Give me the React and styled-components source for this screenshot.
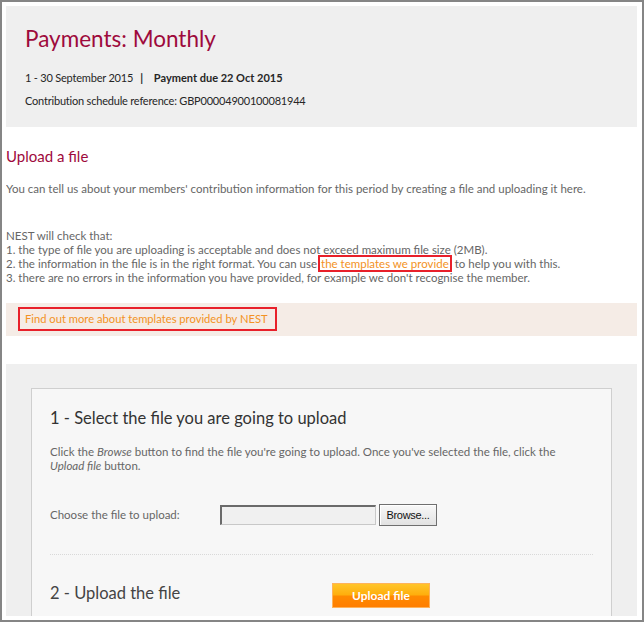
import React from 'react';
import styled, { createGlobalStyle } from 'styled-components';

const FONT = `"Lato", "Liberation Sans", Arial, sans-serif`;

const Global = createGlobalStyle`
  html, body { margin: 0; padding: 0; background: #fff; }
  body { font-family: ${FONT}; }
  * { box-sizing: border-box; }
`;

const Frame = styled.div`
  width: 644px;
  height: 622px;
  border: 2px solid #858585;
  padding: 4px;
  background: #fff;
`;

const Inner = styled.div`
  height: 100%;
  overflow: hidden;
  display: flex;
  flex-direction: column;
`;

const Header = styled.header`
  flex: none;
  background: #efefef;
  margin-right: 1px;
  height: 121px;
  padding: 20px 19px 0;
`;

const Title = styled.h1`
  margin: 0;
  font-size: 22.5px;
  line-height: 26px;
  font-weight: normal;
  color: #9e0a3c;
`;

const Meta = styled.p`
  margin: ${(p) => p.$mt}px 0 0;
  font-size: 11px;
  line-height: 14px;
  color: #262626;
  letter-spacing: -0.2px;
`;

const Strong = styled.strong`
  font-weight: bold;
  letter-spacing: 0;
`;

const Sep = styled.span`
  font-weight: bold;
  margin: 0 11px 0 7px;
`;

const SectionTitle = styled.h2`
  margin: 20px 0 0;
  font-size: 15px;
  line-height: 18px;
  font-weight: normal;
  color: #9e0a3c;
`;

const Text = styled.p`
  margin: ${(p) => p.$mt}px 0 0;
  max-width: ${(p) => p.$max || 'none'};
  font-size: 11.5px;
  line-height: 14px;
  color: #666;
`;

const Boxed = styled.span`
  border: 2px solid #e8202a;
  padding: 0 1px;
  margin-left: -2px;
`;

const Link = styled.a`
  color: #f39224;
  text-decoration: none;
`;

const Banner = styled.div`
  flex: none;
  margin: 18px 1px 0 0;
  background: #f5ece6;
  padding: 4px 12px 5px;
`;

const BannerBox = styled.span`
  display: inline-block;
  border: 2px solid #e8202a;
  padding: 3px 7px 3px 5px;
  font-size: 11.2px;
  line-height: 14px;
`;

const GraySection = styled.section`
  flex: 1;
  min-height: 0;
  margin: 28px 1px 0 0;
  background: #efefef;
  padding: 24px 25px 0;
  display: flex;
  flex-direction: column;
`;

const Card = styled.div`
  flex: 1;
  background: #f7f7f7;
  border: 1px solid #cfcfcf;
  border-bottom: none;
  padding: 19px 18px 0;
`;

const StepTitle = styled.h3`
  margin: 0;
  font-size: 16.5px;
  line-height: 20px;
  font-weight: normal;
  color: #333;
`;

const FileRow = styled.div`
  display: flex;
  align-items: center;
  height: 22px;
  margin-top: 31px;
`;

const Label = styled.span`
  width: 170px;
  font-size: 11.5px;
  line-height: 14px;
  color: #666;
`;

const FileInput = styled.div`
  width: 156px;
  height: 20px;
  background: #f0f0f0;
  border-style: solid;
  border-width: 2px 1px 1px 2px;
  border-color: #6a6a6a #c8c8c8 #c8c8c8 #6a6a6a;
`;

const BrowseButton = styled.button`
  margin-left: 3px;
  width: 58px;
  height: 22px;
  padding: 0;
  border: 1px solid #6f6f6f;
  box-shadow: inset 1px 1px 0 #fff;
  background: linear-gradient(#f8f8f8, #e2e2e2);
  font-family: "Liberation Sans", Arial, sans-serif;
  font-size: 11px;
  color: #111;
  letter-spacing: -0.3px;
`;

const Divider = styled.hr`
  margin: 28px 0 0;
  border: none;
  border-top: 1px dotted #d9d9d9;
  height: 0;
`;

const UploadRow = styled.div`
  display: flex;
  align-items: flex-start;
  margin-top: 28px;
`;

const UploadTitle = styled(StepTitle)`
  width: 282px;
  color: #444;
`;

const UploadButton = styled.button`
  width: 98px;
  height: 25px;
  padding: 0;
  border: 1px solid #ffb35a;
  background: linear-gradient(#ffc52a 0%, #ffae0c 48%, #ff8a00 52%, #ff7e00 100%);
  color: #fff;
  font-family: ${FONT};
  font-weight: bold;
  font-size: 12px;
`;

export default function App() {
  return (
    <>
      <Global />
      <Frame>
        <Inner>
          <Header>
            <Title>Payments: Monthly</Title>
            <Meta $mt={19}>
              1 - 30 September 2015<Sep>|</Sep>
              <Strong>Payment due 22 Oct 2015</Strong>
            </Meta>
            <Meta $mt={9}>Contribution schedule reference: GBP00004900100081944</Meta>
          </Header>

          <SectionTitle>Upload a file</SectionTitle>
          <Text $mt={17}>
            You can tell us about your members' contribution information for this period by creating a file and uploading it here.
          </Text>
          <Text $mt={33}>
            NEST will check that:
            <br />
            1. the type of file you are uploading is acceptable and does not exceed maximum file size (2MB).
            <br />
            2. the information in the file is in the right format. You can use{' '}
            <Boxed>
              <Link href="#">the templates we provide</Link>
            </Boxed>{' '}
            to help you with this.
            <br />
            3. there are no errors in the information you have provided, for example we don't recognise the member.
          </Text>

          <Banner>
            <BannerBox>
              <Link href="#">Find out more about templates provided by NEST</Link>
            </BannerBox>
          </Banner>

          <GraySection>
            <Card>
              <StepTitle>1 - Select the file you are going to upload</StepTitle>
              <Text $mt={17} $max="520px">
                Click the <em>Browse</em> button to find the file you're going to upload. Once you've selected the file, click the{' '}
                <em>Upload file</em> button.
              </Text>
              <FileRow>
                <Label>Choose the file to upload:</Label>
                <FileInput />
                <BrowseButton type="button">Browse...</BrowseButton>
              </FileRow>
              <Divider />
              <UploadRow>
                <UploadTitle>2 - Upload the file</UploadTitle>
                <UploadButton type="button">Upload file</UploadButton>
              </UploadRow>
            </Card>
          </GraySection>
        </Inner>
      </Frame>
    </>
  );
}
